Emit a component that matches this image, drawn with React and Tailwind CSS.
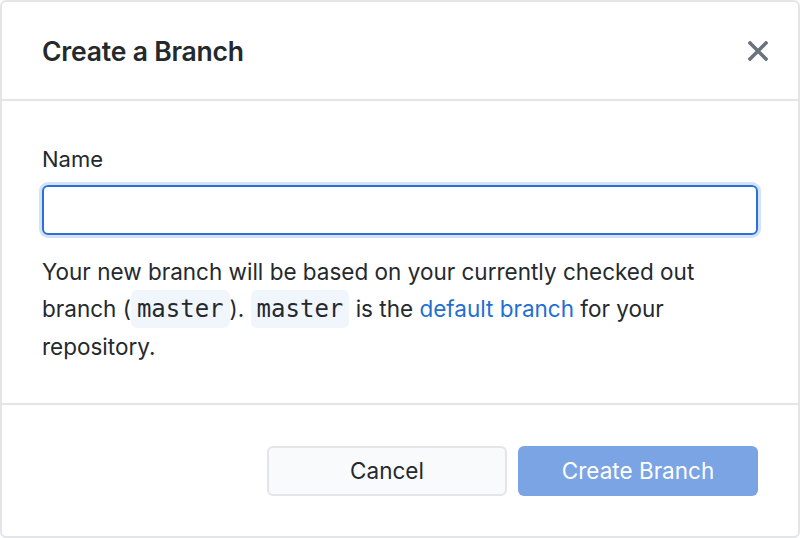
import React from 'react'

const sans = { fontFamily: 'Inter, "Noto Sans", sans-serif' }

const Code = ({ children }) => (
  <code className="bg-[#f1f6fd] rounded-md px-[6px] py-[5px] text-[24px] font-['DejaVu_Sans_Mono',monospace] text-[#24292e]">
    {children}
  </code>
)

const CreateBranchDialog = () => {
  return (
    <div className="w-[800px] h-[538px] bg-white">
      <div className="w-full h-full border-2 border-[#e4e5e9] rounded-md flex flex-col font-['Inter',sans-serif] text-[#24292e]">
        <div className="h-[99px] border-b-2 border-[#e4e5e9] flex items-center justify-between pl-10 pr-[28px]">
          <h1 className="text-[26.5px] font-semibold tracking-[-0.2px] pt-[3px]">Create a Branch</h1>
          <button className="w-[24px] h-[24px] flex items-center justify-center">
            <svg width="20" height="20" viewBox="0 0 20 20">
              <path d="M2 2 L18 18 M18 2 L2 18" stroke="#6a737d" strokeWidth="3.6" strokeLinecap="square" />
            </svg>
          </button>
        </div>

        <div className="flex-1 px-10 pt-[44px] border-b-2 border-[#e4e5e9]">
          <label className="block text-[22px] leading-[28px] mb-[12px]">Name</label>
          <input
            type="text"
            className="w-full h-[50px] border-2 border-[#2d6fd8] rounded-md ring-[3px] ring-[#d3e2f8] outline-none px-3 text-[21px]"
          />
          <p className="mt-[18px] text-[22.5px] leading-[37px]" style={sans}>
            Your new branch will be based on your currently checked out branch (
            <Code>master</Code>). <Code>master</Code> is the{' '}
            <a className="text-[#1f6fd3]">default branch</a> for your repository.
          </p>
        </div>

        <div className="h-[131px] flex items-center justify-end gap-[11px] px-10 pt-[1px]">
          <button className="w-[240px] h-[50px] bg-[#f9fafb] border-2 border-[#e4e5e9] rounded-md text-[22.5px] text-[#24292e]">
            Cancel
          </button>
          <button className="w-[240px] h-[50px] bg-[#7aa4e3] rounded-md text-[22.5px] text-white">
            Create Branch
          </button>
        </div>
      </div>
    </div>
  )
}

export default function App() {
  return <CreateBranchDialog />
}
